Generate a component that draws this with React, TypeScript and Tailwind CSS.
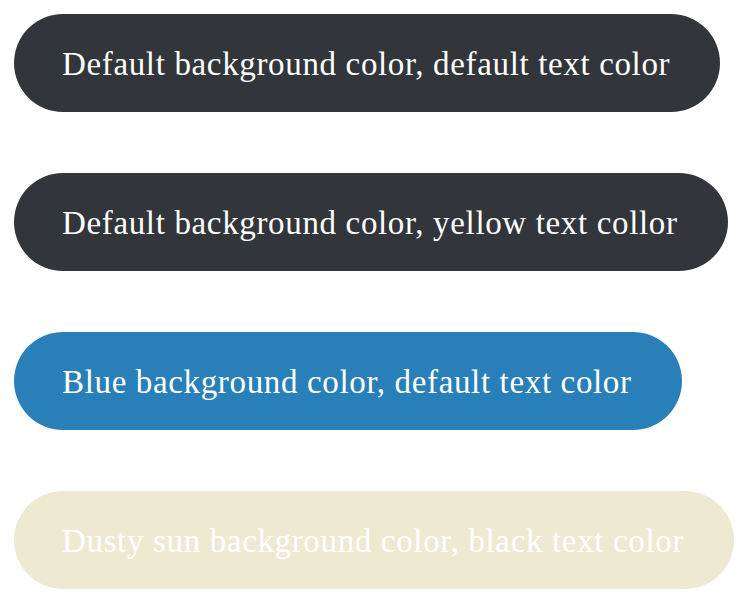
import React from "react";

const pills = [
  { text: "Default background color, default text color", cls: "bg-[#32363a] text-white" },
  { text: "Default background color, yellow text collor", cls: "bg-[#32363a] text-white" },
  { text: "Blue background color, default text color", cls: "bg-[#2980b9] text-white" },
  { text: "Dusty sun background color, black text color", cls: "bg-[#eeead2] text-white" },
];

export default function App() {
  return (
    <div className="min-h-[602px] w-[744px] bg-white pl-[14px] pt-[14px] flex flex-col items-start gap-[61px]" style={{ fontFamily: '"Liberation Serif", serif' }}>
      {pills.map((p) => (
        <div key={p.text} className={`${p.cls} h-[98px] rounded-full pl-[48px] pr-[50px] pt-[3px] flex items-center text-[33px] tracking-[0.65px] whitespace-nowrap`}>
          {p.text}
        </div>
      ))}
    </div>
  );
}
